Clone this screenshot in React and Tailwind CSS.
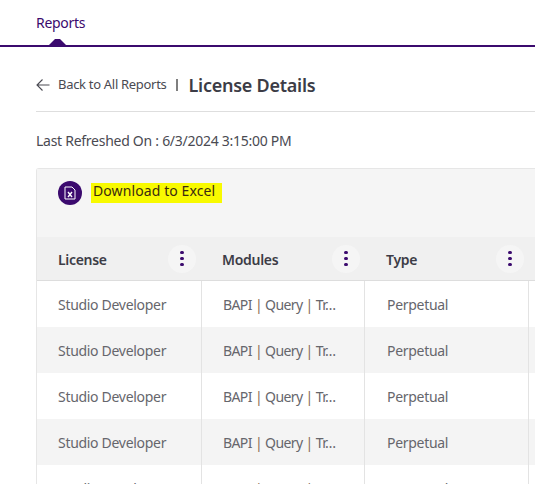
import React from "react";

const rows = [0, 1, 2, 3, 4];
const columns = ["License", "Modules", "Type"];

const HeaderCell = ({ label }) => {
  return (
    <div className="w-[164px] shrink-0 flex items-center justify-between pl-[21px] pr-[5px]">
      <span className="text-[14px] font-semibold text-[#3c3c46] translate-y-px">{label}</span>
      <span className="w-7 h-7 rounded-full bg-[#f5f5f5] flex flex-col items-center justify-center gap-[2.5px]">
        <span className="w-[3.5px] h-[3.5px] rounded-full bg-[#3b0a6e]"></span>
        <span className="w-[3.5px] h-[3.5px] rounded-full bg-[#3b0a6e]"></span>
        <span className="w-[3.5px] h-[3.5px] rounded-full bg-[#3b0a6e]"></span>
      </span>
    </div>
  );
};

const Row = ({ shaded }) => {
  return (
    <div className={`h-[46px] flex shrink-0 text-[14px] text-[#66666c] ${shaded ? "bg-[#f4f4f4]" : "bg-white"}`}>
      <div className="w-[165px] shrink-0 flex items-center pl-[21px] border-r border-[#e3e3e3]">
        Studio Developer
      </div>
      <div className="w-[163px] shrink-0 flex items-center pl-[21px] border-r border-[#e3e3e3]">
        <span className="tracking-[-0.6px]">BAPI <span className="text-[#8a6a55]">|</span> Query <span className="text-[#8a6a55]">|</span> Tr…</span>
      </div>
      <div className="w-[164px] shrink-0 flex items-center pl-[22px] border-r border-[#e3e3e3]">
        Perpetual
      </div>
      <div className="w-[164px] shrink-0"></div>
    </div>
  );
};

export default function App() {
  return (
    <div className="w-[535px] h-[484px] overflow-hidden bg-white font-['Noto_Sans',sans-serif] tracking-[-0.3px]">
      <div className="relative h-[47px] border-b-2 border-[#3b0a6e] pl-9 pt-[13px]">
        <span className="text-[14px] leading-5 text-[#3b0a6e] block">Reports</span>
        <svg className="absolute left-[49px] bottom-0" width="17" height="6" viewBox="0 0 17 6">
          <path d="M0 6 L6 0 H11 L17 6 Z" fill="#3b0a6e" />
        </svg>
      </div>

      <div className="pl-9">
        <div className="h-[65px] pt-[12px] flex items-center border-b border-[#dedede]">
          <svg width="14" height="14" viewBox="0 0 14 14" fill="none" stroke="#4a4a52" strokeWidth="1.1">
            <path d="M13.5 7 H1 M6.5 1.5 L1 7 L6.5 12.5" />
          </svg>
          <span className="ml-[8px] text-[13px] text-[#4a4a52]">Back to All Reports</span>
          <span className="ml-[9px] w-[2px] h-3 bg-[#7f7f7f]"></span>
          <span className="ml-[11px] text-[18px] font-semibold text-[#3c3c46] tracking-[-0.25px]">License Details</span>
        </div>

        <div className="h-[56px] flex items-center text-[14px] text-[#4a4a52] tracking-[-0.27px]">
          Last Refreshed On : 6/3/2024 3:15:00 PM
        </div>

        <div className="border-l border-t border-[#e6e6e6] rounded-tl-[3px] w-[600px]">
          <div className="h-[68px] bg-[#f5f5f5] flex items-start pl-[21px] pt-[12px]">
            <span className="w-6 h-6 rounded-full bg-[#3b0a6e] flex items-center justify-center">
              <svg width="12" height="14" viewBox="0 0 12 14" fill="none">
                <path d="M1 1 H8 L11 4 V13 H1 Z" stroke="#ffffff" strokeWidth="1" />
                <path d="M4 6 L8 11 M8 6 L4 11" stroke="#ffffff" strokeWidth="1.4" />
              </svg>
            </span>
            <span className="ml-[9px] mt-[2px] h-5 w-[131px] bg-[#f8fa00] pl-[2px] text-[14px] leading-4 text-[#3c2a10] tracking-[0.1px]">
              Download to Excel
            </span>
          </div>

          <div className="h-[44px] bg-[#f0f0f0] border-b border-[#dddddd] flex">
            {columns.map((label) => (
              <HeaderCell key={label} label={label} />
            ))}
          </div>

          <div className="flex flex-col">
            {rows.map((i) => (
              <Row key={i} shaded={i % 2 === 1} />
            ))}
          </div>
        </div>
      </div>
    </div>
  );
}
